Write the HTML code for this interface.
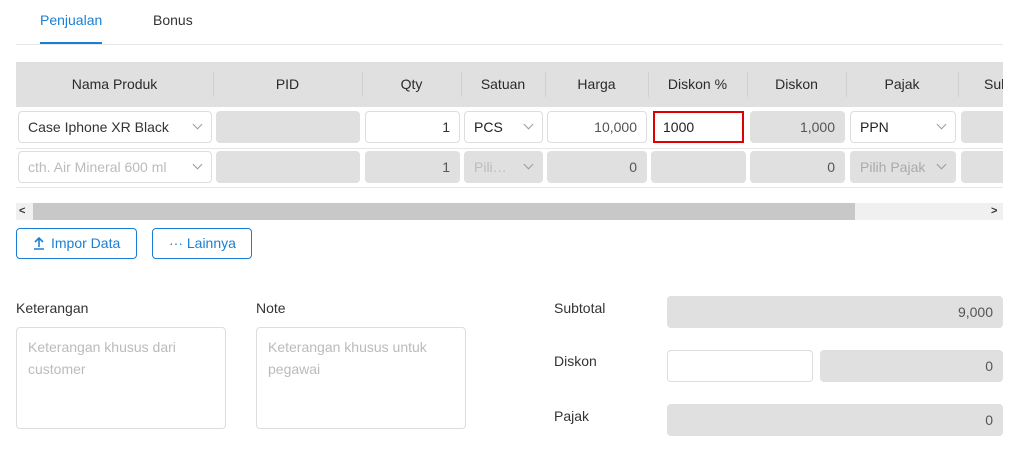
<!DOCTYPE html>
<html><head><style>
*{box-sizing:border-box;margin:0;padding:0}
body{width:1024px;height:450px;background:#fff;font-family:"Liberation Sans",sans-serif;font-size:13.5px;color:#333;position:relative;overflow:hidden}
.a{position:absolute}
.tab{top:12px;font-size:14px}
.hdr{left:16px;top:62px;width:987px;height:45px;background:#e0e0e0}
.h{position:absolute;top:62px;height:45px;line-height:45px;text-align:center;font-size:14px;color:#2a2a2a}
.sep{position:absolute;top:72px;width:1px;height:25px;background:#d0d0d0}
.in{position:absolute;border:1px solid #ddd;border-radius:4px;background:#fff;height:32px;line-height:30px;padding:0 9px;font-size:14px;white-space:nowrap;overflow:hidden}
.g{background:#e0e0e0;border-color:#e0e0e0;color:#555}
.r{text-align:right}
.ph{color:#bbb}
.chev{position:absolute;right:10px;top:9px;width:7px;height:7px;border-right:1px solid #999;border-bottom:1px solid #999;transform:rotate(45deg)}
.btn{position:absolute;top:228px;height:31px;border:1px solid #1a7fd4;border-radius:4px;color:#1a7fd4;line-height:29px;font-size:14px;padding-left:16px}
.lbl{position:absolute;font-size:14px;color:#333}
.ta{position:absolute;top:327px;height:102px;border:1px solid #ddd;border-radius:4px;padding:8px 11px;color:#bbb;font-size:14px;line-height:22px}
</style></head><body>
<div class="a tab" style="left:40px;color:#1a7fd4">Penjualan</div>
<div class="a tab" style="left:153px">Bonus</div>
<div class="a" style="left:40px;top:42px;width:62px;height:3px;background:#1a7fd4"></div>
<div class="a" style="left:16px;top:44px;width:987px;height:1px;background:#e6e6e6"></div>

<div class="a hdr"></div>
<div class="h" style="left:16px;width:197px">Nama Produk</div>
<div class="h" style="left:213px;width:149px">PID</div>
<div class="h" style="left:362px;width:99px">Qty</div>
<div class="h" style="left:461px;width:84px">Satuan</div>
<div class="h" style="left:545px;width:103px">Harga</div>
<div class="h" style="left:648px;width:99px">Diskon %</div>
<div class="h" style="left:747px;width:99px">Diskon</div>
<div class="h" style="left:846px;width:112px">Pajak</div>
<div class="h" style="left:958px;width:45px;overflow:hidden;text-align:left;padding-left:26px">Subtotal</div>
<div class="sep" style="left:213px"></div><div class="sep" style="left:362px"></div><div class="sep" style="left:461px"></div><div class="sep" style="left:545px"></div><div class="sep" style="left:648px"></div><div class="sep" style="left:747px"></div><div class="sep" style="left:846px"></div><div class="sep" style="left:958px"></div>

<div class="in" style="left:18px;top:111px;width:194px;color:#333">Case Iphone XR Black<span class="chev"></span></div>
<div class="in g" style="left:216px;top:111px;width:144px"></div>
<div class="in r" style="left:365px;top:111px;width:95px">1</div>
<div class="in" style="left:464px;top:111px;width:79px;color:#222">PCS<span class="chev"></span></div>
<div class="in r" style="left:547px;top:111px;width:100px;color:#555">10,000</div>
<div class="in" style="left:653px;top:111px;width:91px;border:2px solid #e00000;border-radius:0;color:#222;line-height:28px;padding-left:8px">1000</div>
<div class="in g r" style="left:750px;top:111px;width:95px">1,000</div>
<div class="in" style="left:850px;top:111px;width:106px;color:#222">PPN<span class="chev"></span></div>
<div class="in g" style="left:961px;top:111px;width:42px;border-radius:4px 0 0 4px"></div>
<div class="a" style="left:16px;top:148px;width:987px;height:1px;background:#e6e6e6"></div>

<div class="in ph" style="left:18px;top:151px;width:194px">cth. Air Mineral 600 ml<span class="chev"></span></div>
<div class="in g" style="left:216px;top:151px;width:144px"></div>
<div class="in g r" style="left:365px;top:151px;width:95px">1</div>
<div class="in g" style="left:464px;top:151px;width:79px;color:#bbb">Pili…<span class="chev"></span></div>
<div class="in g r" style="left:547px;top:151px;width:100px">0</div>
<div class="in g" style="left:651px;top:151px;width:95px"></div>
<div class="in g r" style="left:750px;top:151px;width:95px">0</div>
<div class="in g" style="left:850px;top:151px;width:106px;color:#aaa">Pilih Pajak<span class="chev"></span></div>
<div class="in g" style="left:961px;top:151px;width:42px;border-radius:4px 0 0 4px"></div>
<div class="a" style="left:16px;top:187px;width:987px;height:1px;background:#e6e6e6"></div>

<div class="a" style="left:16px;top:203px;width:987px;height:17px;background:#f0f0f0"></div>
<div class="a" style="left:33px;top:203px;width:822px;height:17px;background:#c8c8c8"></div>
<div class="a" style="left:19px;top:205px;font-size:11px;font-weight:bold;color:#333">&lt;</div>
<div class="a" style="left:991px;top:205px;font-size:11px;font-weight:bold;color:#333">&gt;</div>

<div class="btn" style="left:16px;width:121px"><svg width="12" height="14" style="vertical-align:-2px;margin-right:6px" viewBox="0 0 12 14"><path d="M6 11V2M2 6l4-4 4 4M1 13h10" stroke="#1a7fd4" stroke-width="1.6" fill="none"/></svg>Impor Data</div>
<div class="btn" style="left:152px;width:100px">··· Lainnya</div>

<div class="lbl" style="left:16px;top:300px">Keterangan</div>
<div class="lbl" style="left:256px;top:300px">Note</div>
<div class="ta" style="left:16px;width:210px">Keterangan khusus dari customer</div>
<div class="ta" style="left:256px;width:210px">Keterangan khusus untuk pegawai</div>

<div class="lbl" style="left:554px;top:300px">Subtotal</div>
<div class="in g r" style="left:667px;top:296px;width:336px;height:32px">9,000</div>
<div class="lbl" style="left:554px;top:353px">Diskon</div>
<div class="in" style="left:667px;top:350px;width:146px"></div>
<div class="in g r" style="left:820px;top:350px;width:183px">0</div>
<div class="lbl" style="left:554px;top:408px">Pajak</div>
<div class="in g r" style="left:667px;top:404px;width:336px">0</div>
</body></html>
